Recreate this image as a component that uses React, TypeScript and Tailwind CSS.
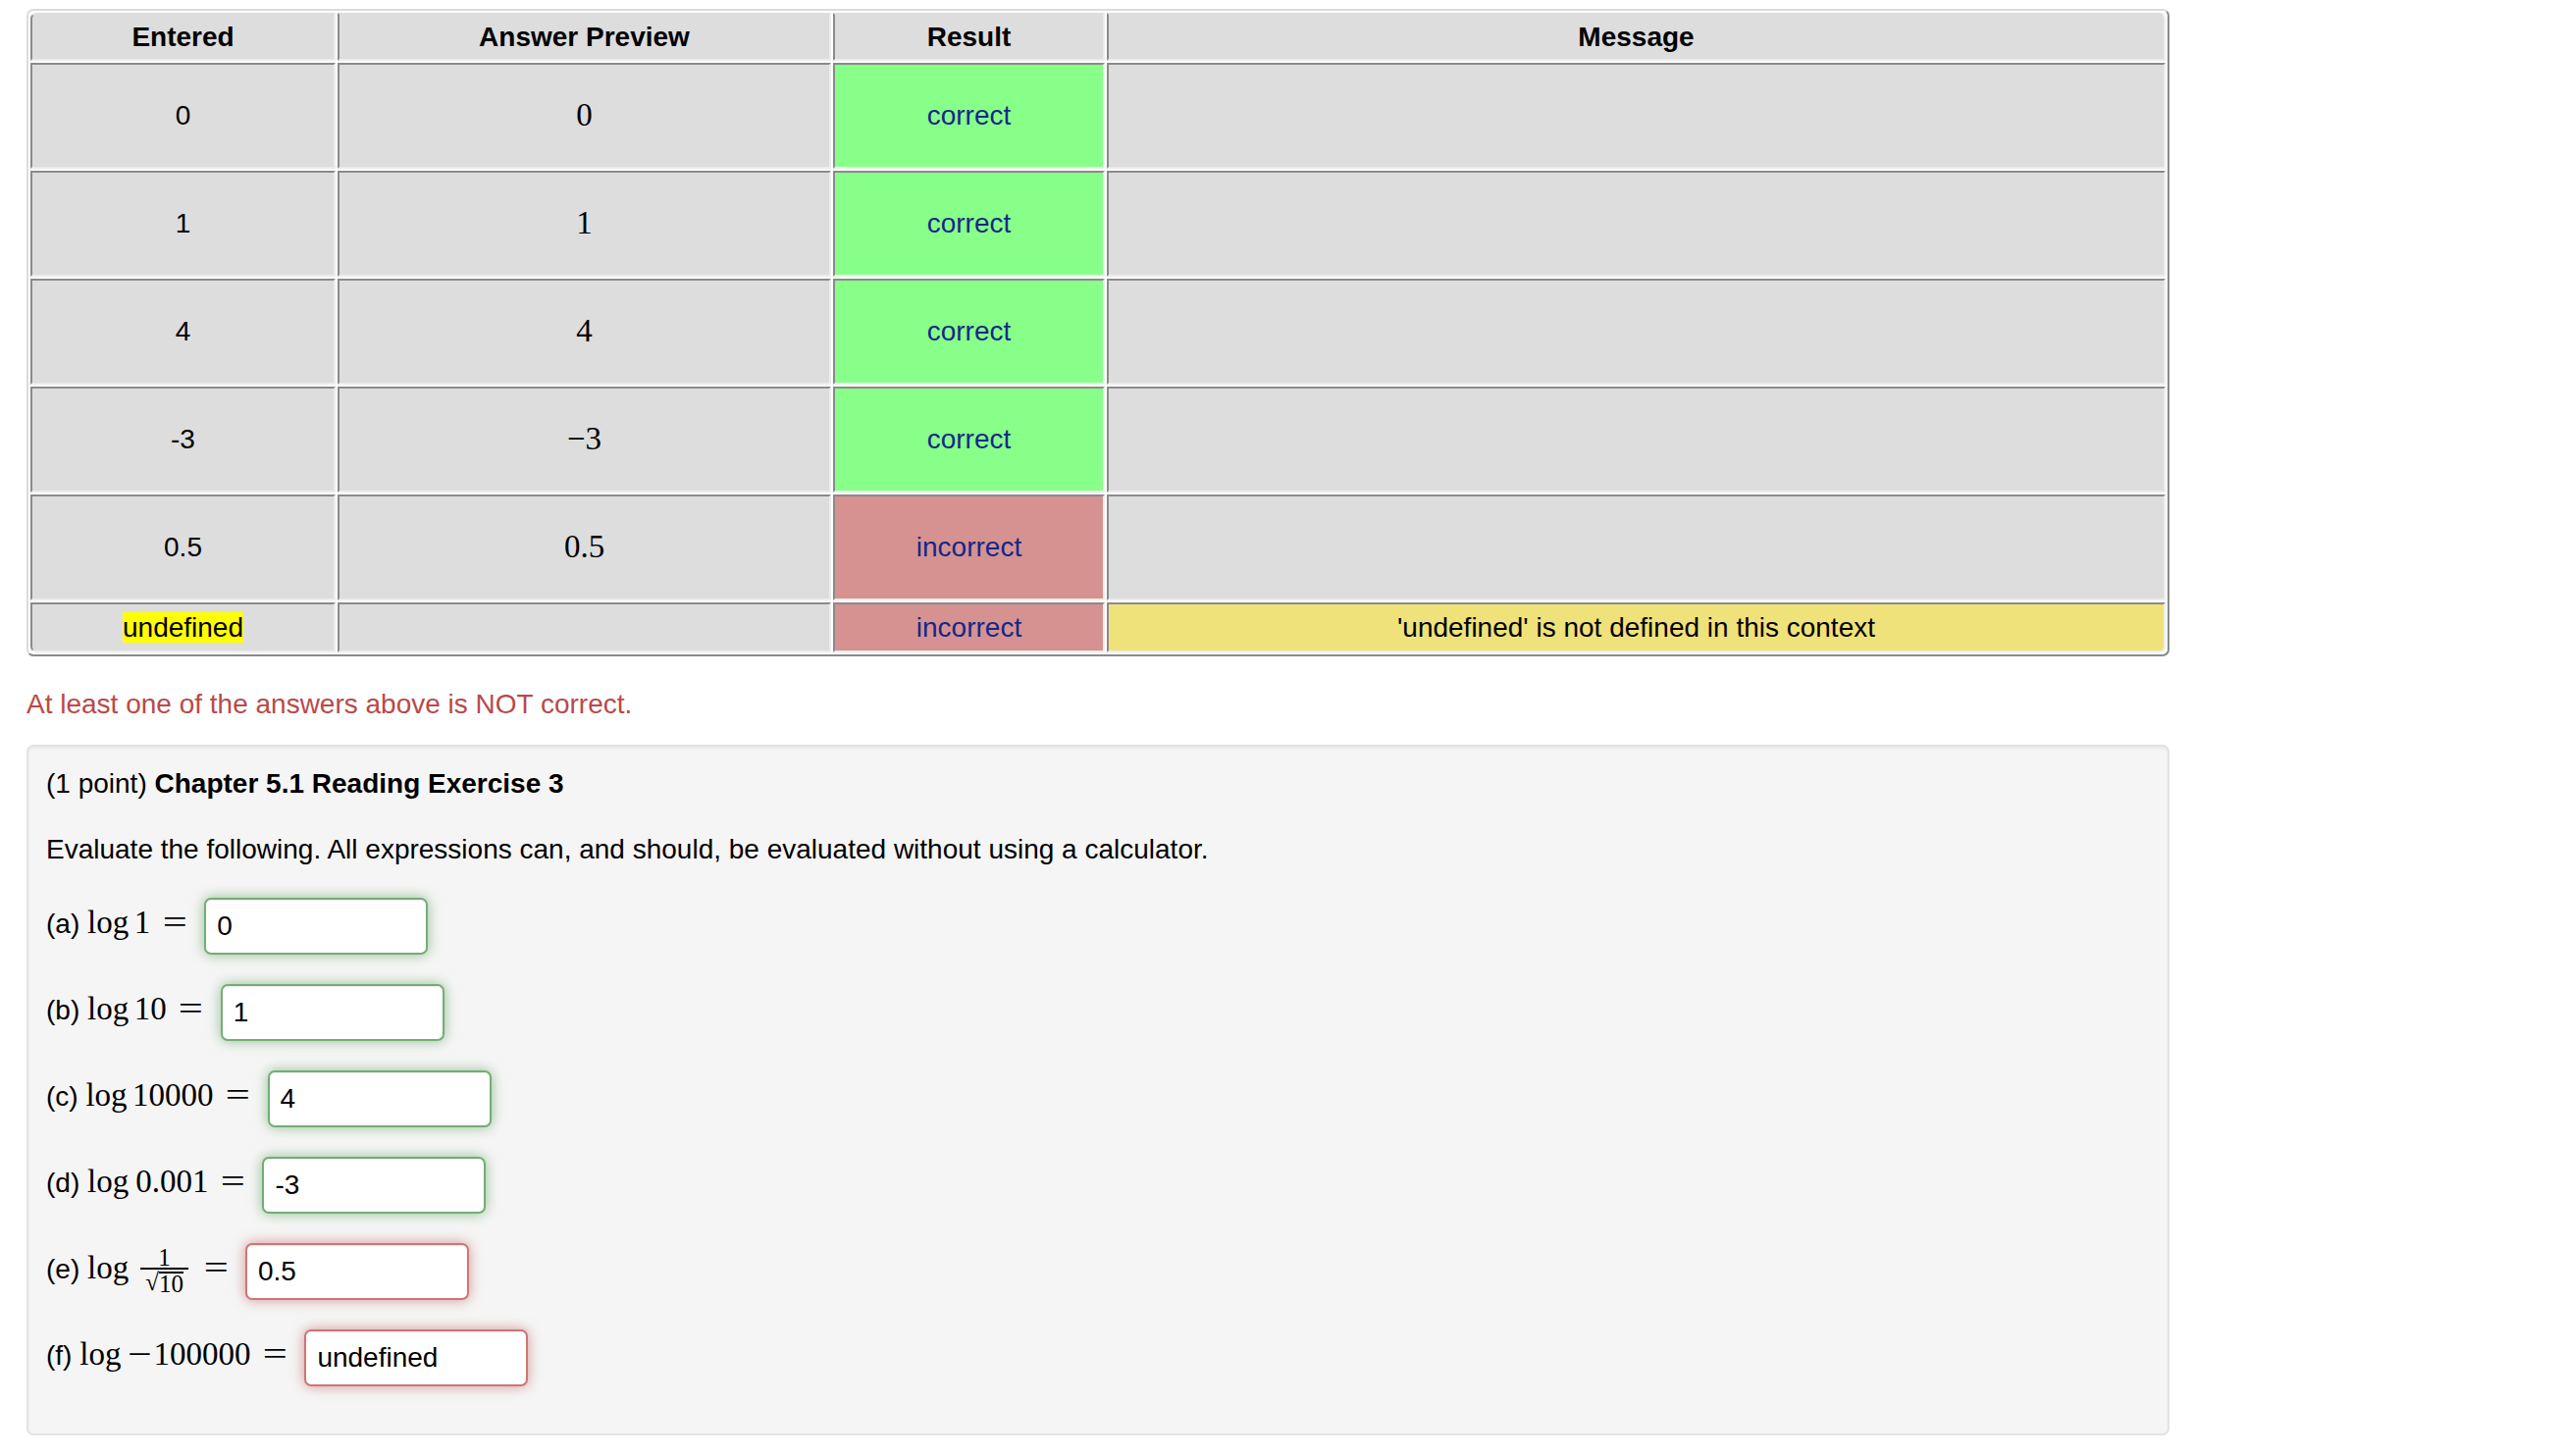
import React from "react";

const sans = "font-['Liberation_Sans',Arial,sans-serif]";
const serif = "font-['Liberation_Serif','Times_New_Roman',serif]";

const td =
  "border-2 border-t-[#8a8a8a] border-l-[#8a8a8a] border-r-[#ececec] border-b-[#ececec] text-center align-middle px-[8px] py-0";
const th =
  "border-2 border-t-[#dddddd] border-l-[#8a8a8a] border-r-[#ececec] border-b-[#ececec] bg-[#dddddd] text-center align-middle px-[8px] py-0 font-bold h-[49px]";

const rows = [
  { entered: "0", preview: "0", ok: true },
  { entered: "1", preview: "1", ok: true },
  { entered: "4", preview: "4", ok: true },
  { entered: "-3", preview: "\u22123", ok: true },
  { entered: "0.5", preview: "0.5", ok: false },
];

function Eq({ ml = "ml-[12px]" }: { ml?: string }) {
  return (
    <span className={`inline-block w-[26px] text-center ${ml} mr-[17px]`}>
      <span className="inline-block scale-x-[1.35]">=</span>
    </span>
  );
}

function Field({ value, ok }: { value: string; ok: boolean }) {
  return (
    <input
      readOnly
      value={value}
      className={`h-[58px] w-[228px] shrink-0 rounded-[7px] border-2 bg-white pl-[11px] text-[28px] text-black outline-none ${sans} ${
        ok
          ? "border-[rgb(116,173,116)] shadow-[inset_0_1px_1px_rgba(0,0,0,0.075),0_0_13px_rgba(81,153,81,0.6)]"
          : "border-[rgb(204,118,118)] shadow-[inset_0_1px_1px_rgba(0,0,0,0.075),0_0_13px_rgba(191,84,84,0.6)]"
      }`}
    />
  );
}

function SimpleRow({
  label,
  arg,
  value,
  ok,
}: {
  label: string;
  arg: React.ReactNode;
  value: string;
  ok: boolean;
}) {
  return (
    <div className="flex h-[58px] items-center">
      <span className="mb-[7px] flex h-[33px] items-baseline leading-[33px]">
        <span className="whitespace-pre">({label}) </span>
        <span className={`${serif} text-[33px] leading-[33px]`}>log</span>
        <span className={`${serif} text-[33px] leading-[33px] flex items-baseline`}>{arg}</span>
        <span className={`${serif} text-[33px] leading-[33px]`}>
          <Eq />
        </span>
      </span>
      <Field value={value} ok={ok} />
    </div>
  );
}

export default function App() {
  return (
    <div className={`min-h-screen bg-white text-[28px] text-black ${sans}`}>
      <div className="w-[2211px] pl-[27px] pt-[9px]">
        <table className="w-[2184px] table-fixed border-separate border-spacing-[2px] rounded-[7px] border-2 border-t-[#dcdcdc] border-l-[#dcdcdc] border-r-[#8a8a8a] border-b-[#8a8a8a]">
          <thead>
            <tr>
              <th className={`${th} w-[311px] rounded-tl-[6px]`}>Entered</th>
              <th className={`${th} w-[503px]`}>Answer Preview</th>
              <th className={`${th} w-[277px]`}>Result</th>
              <th className={`${th} rounded-tr-[6px]`}>Message</th>
            </tr>
          </thead>
          <tbody>
            {rows.map((r, i) => (
              <tr key={i}>
                <td className={`${td} h-[108px] bg-[#dddddd]`}>{r.entered}</td>
                <td className={`${td} h-[108px] bg-[#dddddd] ${serif} text-[33px]`}>{r.preview}</td>
                <td
                  className={`${td} h-[108px] text-[#13278a] ${
                    r.ok ? "bg-[#88ff88]" : "bg-[#d69191]"
                  }`}
                >
                  {r.ok ? "correct" : "incorrect"}
                </td>
                <td className={`${td} h-[108px] bg-[#dddddd]`}></td>
              </tr>
            ))}
            <tr>
              <td className={`${td} h-[51px] bg-[#dddddd] rounded-bl-[6px]`}>
                <span className="bg-[#ffff00]">undefined</span>
              </td>
              <td className={`${td} h-[51px] bg-[#dddddd]`}></td>
              <td className={`${td} h-[51px] bg-[#d69191] text-[#13278a]`}>incorrect</td>
              <td className={`${td} h-[51px] bg-[#efe27a] rounded-br-[6px]`}>
                'undefined' is not defined in this context
              </td>
            </tr>
          </tbody>
        </table>

        <div className="mt-[32px] leading-[33px] text-[#b94a48]">
          At least one of the answers above is NOT correct.
        </div>

        <div className="mt-[25px] h-[704px] w-[2184px] rounded-[7px] border-2 border-[#e3e3e3] bg-[#f5f5f5] pl-[18px] pt-[21px] shadow-[inset_0_2px_2px_rgba(0,0,0,0.05)]">
          <p className="leading-[33px]">
            (1 point) <b>Chapter 5.1 Reading Exercise 3</b>
          </p>
          <p className="mt-[34px] leading-[33px]">
            Evaluate the following. All expressions can, and should, be evaluated without using a
            calculator.
          </p>

          <div className="mt-[33px] flex flex-col gap-[30px]">
            <SimpleRow label="a" arg={<span className="ml-[5.5px]">1</span>} value="0" ok />
            <SimpleRow label="b" arg={<span className="ml-[5.5px]">10</span>} value="1" ok />
            <SimpleRow label="c" arg={<span className="ml-[5.5px]">10000</span>} value="4" ok />
            <SimpleRow
              label="d"
              arg={<span className="ml-[7px]">0.001</span>}
              value="-3"
              ok
            />

            <div className="flex h-[58px] items-center">
              <span className="mb-[7px] flex h-[33px] items-baseline leading-[33px]">
                <span className="whitespace-pre">(e) </span>
                <span className={`${serif} text-[33px] leading-[33px]`}>log</span>
              </span>
              <span className={`${serif} ml-[12px] inline-flex flex-col items-stretch`}>
                <span className="text-center text-[25px] leading-[20px]">1</span>
                <span className="h-[2px] bg-black"></span>
                <span className="flex items-start px-[5px] text-[25px] leading-[26px]">
                  <span className="leading-[26px]">{"\u221A"}</span>
                  <span className="mt-[2px] border-t-2 border-black leading-[22px]">10</span>
                </span>
              </span>
              <span className={`${serif} mb-[7px] text-[33px] leading-[33px]`}>
                <Eq ml="ml-[15px]" />
              </span>
              <Field value="0.5" ok={false} />
            </div>

            <div className="flex h-[58px] items-center">
              <span className="mb-[7px] flex h-[33px] items-baseline leading-[33px]">
                <span className="whitespace-pre">(f) </span>
                <span className={`${serif} text-[33px] leading-[33px]`}>log</span>
                <span
                  className={`${serif} ml-[6px] inline-block w-[25px] text-center text-[33px] leading-[33px]`}
                >
                  <span className="inline-block scale-x-[1.33]">{"\u2212"}</span>
                </span>
                <span className={`${serif} ml-[2px] text-[33px] leading-[33px]`}>100000</span>
                <span className={`${serif} text-[33px] leading-[33px]`}>
                  <Eq />
                </span>
              </span>
              <Field value="undefined" ok={false} />
            </div>
          </div>
        </div>
      </div>
    </div>
  );
}
